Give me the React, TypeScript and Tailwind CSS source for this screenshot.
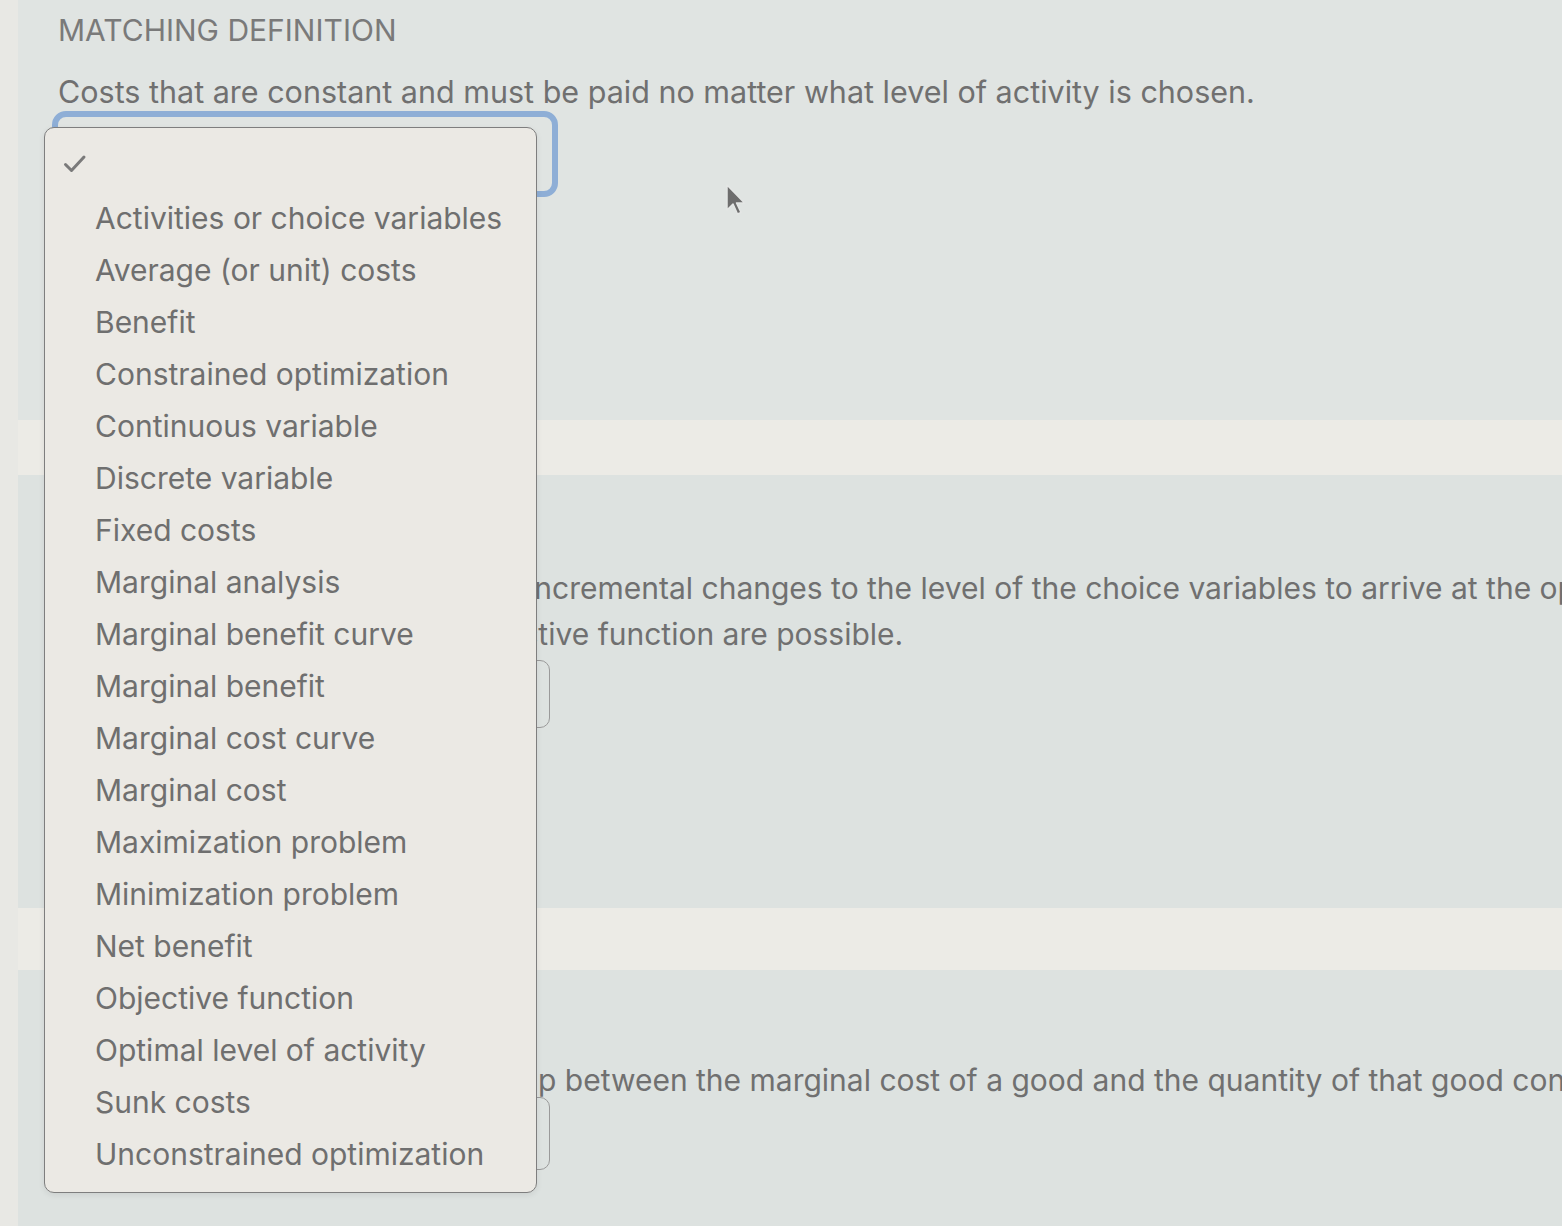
import React from "react";

const items = [
  "Activities or choice variables",
  "Average (or unit) costs",
  "Benefit",
  "Constrained optimization",
  "Continuous variable",
  "Discrete variable",
  "Fixed costs",
  "Marginal analysis",
  "Marginal benefit curve",
  "Marginal benefit",
  "Marginal cost curve",
  "Marginal cost",
  "Maximization problem",
  "Minimization problem",
  "Net benefit",
  "Objective function",
  "Optimal level of activity",
  "Sunk costs",
  "Unconstrained optimization",
];

export default function App() {
  return (
    <div className="relative w-[1562px] h-[1226px] overflow-hidden bg-[#e8e8e4] pl-[18px] font-['Inter',sans-serif] text-[#707070]">
      <div className="flex flex-col h-full">
        {/* Card 1 */}
        <div className="h-[420px] bg-[#e0e4e2] pl-[40px] pt-[11px]">
          <div className="text-[30px] leading-[38px] text-[#7a7a7a]">MATCHING DEFINITION</div>
          <div className="mt-[21px] text-[30.5px] leading-[44px] whitespace-nowrap">
            Costs that are constant and must be paid no matter what level of activity is chosen.
          </div>
          <div className="-ml-[6px] mt-[-3px] w-[506px] h-[86px] rounded-[14px] border-[6px] border-[#8eaed6]" />
        </div>
        {/* gap */}
        <div className="h-[55px] bg-[#ecebe6]" />
        {/* Card 2 */}
        <div className="h-[433px] bg-[#dde2e0] pl-[40px] pt-[90px]">
          <div className="text-[30px] leading-[46px] whitespace-nowrap">
            <div>
              <span className="tracking-[-0.2px]">A choice variable for which small i</span>ncremental changes to the level of the choice variables to arrive at the optimal values
            </div>
            <div>of the choice variable in the objective function are possible.</div>
          </div>
          <div className="-ml-[6px] mt-[3px] w-[498px] h-[68px] rounded-[10px] border-[1.5px] border-[#9a9a9a]" />
        </div>
        {/* gap */}
        <div className="h-[62px] bg-[#ecebe6]" />
        {/* Card 3 */}
        <div className="flex-1 bg-[#dde2e0] pl-[40px] pt-[87px]">
          <div className="text-[30px] leading-[46px] whitespace-nowrap">
            A curve that shows the relationship between the marginal cost of a good and the quantity of that good consumed.
          </div>
          <div className="-ml-[6px] mt-[-6px] w-[498px] h-[73px] rounded-[10px] border-[1.5px] border-[#9a9a9a]" />
        </div>
      </div>

      {/* Open dropdown list */}
      <div className="absolute left-[44px] top-[127px] w-[493px] h-[1066px] rounded-[10px] border-[1.5px] border-[#7e7e7e] bg-[#ebe9e4] pt-[8px] shadow-[0_2px_6px_rgba(0,0,0,0.08)]">
        <div className="h-[56px] flex items-center pl-[18px]">
          <svg width="24" height="20" viewBox="0 0 24 20" fill="none">
            <path d="M2.5 10.5 L8.5 16.5 L21 3" stroke="#7a7a7a" strokeWidth="3" strokeLinecap="round" strokeLinejoin="round" />
          </svg>
        </div>
        {items.map((t) => (
          <div key={t} className="h-[52px] flex items-center pl-[50px] text-[30px] text-[#6f6f6f] whitespace-nowrap">
            {t}
          </div>
        ))}
      </div>

      {/* Mouse pointer */}
      <svg className="absolute left-[725px] top-[183px]" width="22" height="36" viewBox="0 0 22 36">
        <path d="M2 2 L2 27 L8 21 L12.5 31 L16 29.5 L11.5 20 L19.5 20 Z" fill="#6d6d6d" stroke="#e4e6e5" strokeWidth="1.5" strokeLinejoin="round" />
      </svg>
    </div>
  );
}
